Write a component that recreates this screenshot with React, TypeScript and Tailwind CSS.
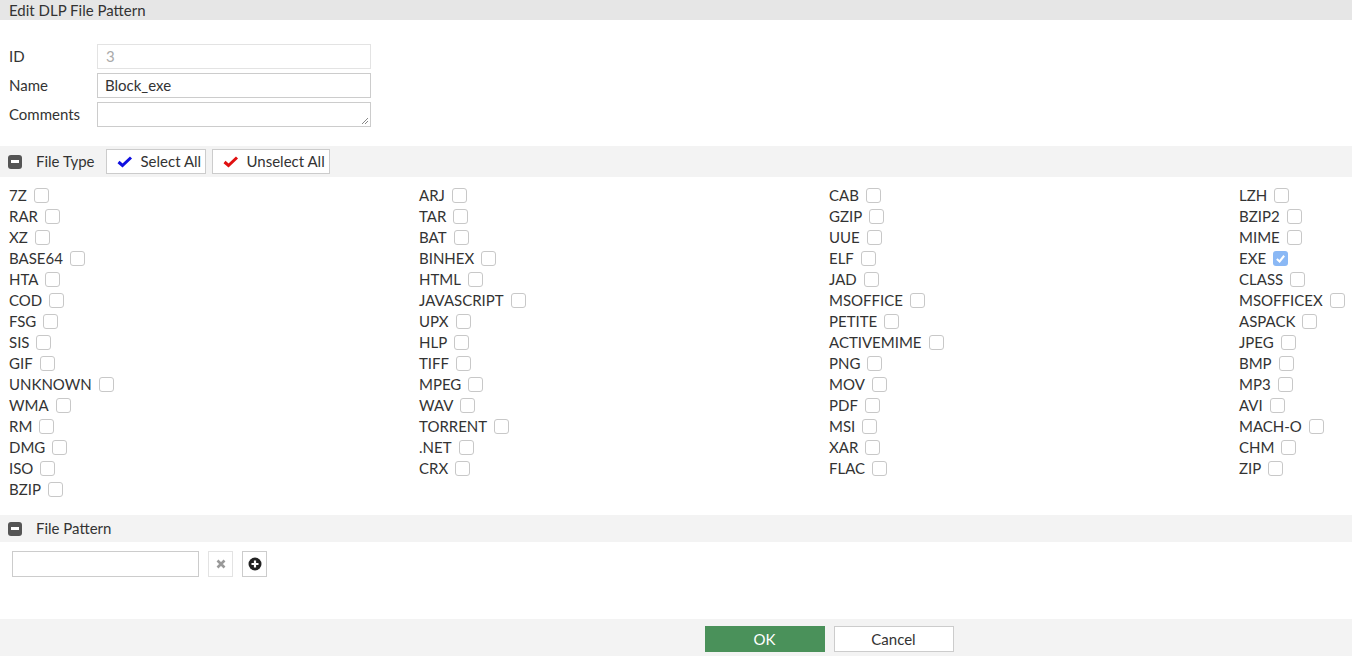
import React from 'react';

const rows: [string, string, string, string][] = [
  ['7Z', 'ARJ', 'CAB', 'LZH'],
  ['RAR', 'TAR', 'GZIP', 'BZIP2'],
  ['XZ', 'BAT', 'UUE', 'MIME'],
  ['BASE64', 'BINHEX', 'ELF', 'EXE'],
  ['HTA', 'HTML', 'JAD', 'CLASS'],
  ['COD', 'JAVASCRIPT', 'MSOFFICE', 'MSOFFICEX'],
  ['FSG', 'UPX', 'PETITE', 'ASPACK'],
  ['SIS', 'HLP', 'ACTIVEMIME', 'JPEG'],
  ['GIF', 'TIFF', 'PNG', 'BMP'],
  ['UNKNOWN', 'MPEG', 'MOV', 'MP3'],
  ['WMA', 'WAV', 'PDF', 'AVI'],
  ['RM', 'TORRENT', 'MSI', 'MACH-O'],
  ['DMG', '.NET', 'XAR', 'CHM'],
  ['ISO', 'CRX', 'FLAC', 'ZIP'],
  ['BZIP', '', '', ''],
];

const Check = ({ checked }: { checked?: boolean }) =>
  checked ? (
    <span className="inline-flex h-[15px] w-[15px] items-center justify-center rounded-[3px] bg-[#8ab8f5]">
      <svg width="11" height="11" viewBox="0 0 12 12">
        <path d="M2 6.5 L5 9.2 L10 3" fill="none" stroke="#fff" strokeWidth="2.2" />
      </svg>
    </span>
  ) : (
    <span className="inline-block h-[15px] w-[15px] rounded-[3px] border border-[#c8c8c8] bg-white" />
  );

const Minus = () => (
  <span className="inline-flex h-[14px] w-[14px] items-center justify-center rounded-[3px] bg-[#555]">
    <span className="h-[3px] w-[8px] bg-white" />
  </span>
);

const SectionBar = ({ title, children, className }: { title: string; children?: React.ReactNode; className: string }) => (
  <div className={`flex items-center bg-[#f3f3f3] pl-[8px] ${className}`}>
    <Minus />
    <span className="ml-[14px] mr-[11px]">{title}</span>
    {children}
  </div>
);

export default function App() {
  return (
    <div className="h-[656px] w-[1352px] overflow-hidden bg-white">
      <div className="flex h-[656px] w-[1658px] flex-col bg-white text-[15px] text-[#333] font-['Lato',sans-serif]">
        <div className="flex h-[20px] items-center bg-[#e6e6e6] pl-[9px]">Edit DLP File Pattern</div>

        <div className="mt-[24px] flex flex-col gap-[4px] pl-[9px]">
          <div className="flex items-center">
            <span className="w-[88px]">ID</span>
            <div className="flex h-[25px] w-[274px] items-center border border-[#e3e3e3] px-[8px] text-[#aaa]">3</div>
          </div>
          <div className="flex items-center">
            <span className="w-[88px]">Name</span>
            <div className="flex h-[25px] w-[274px] items-center border border-[#ccc] px-[7px]">Block_exe</div>
          </div>
          <div className="flex items-center">
            <span className="w-[88px]">Comments</span>
            <div className="relative h-[25px] w-[274px] border border-[#ccc]">
              <svg className="absolute bottom-[1px] right-[1px]" width="8" height="8" viewBox="0 0 8 8">
                <path d="M7 1 L1 7 M7 4 L4 7" stroke="#888" strokeWidth="1" />
              </svg>
            </div>
          </div>
        </div>

        <SectionBar title="File Type" className="mt-[19px] h-[31px]">
          <button className="flex h-[25px] w-[100px] items-center gap-[8px] border border-[#ccc] bg-white pl-[10px]">
            <svg width="16" height="12" viewBox="0 0 16 12">
              <path d="M1.5 6 L5.5 9.5 L14 1.5" fill="none" stroke="#1010e0" strokeWidth="3" />
            </svg>
            Select All
          </button>
          <button className="ml-[6px] flex h-[25px] w-[118px] items-center gap-[8px] border border-[#ccc] bg-white pl-[10px]">
            <svg width="16" height="12" viewBox="0 0 16 12">
              <path d="M1.5 6 L5.5 9.5 L14 1.5" fill="none" stroke="#e01010" strokeWidth="3" />
            </svg>
            Unselect All
          </button>
        </SectionBar>

        <div className="mt-[8px] grid grid-cols-[410px_410px_410px_410px] pl-[9px]">
          {rows.map((r, i) =>
            r.map((name, j) => (
              <div key={`${i}-${j}`} className="flex h-[21px] items-center gap-[7px]">
                {name && (
                  <>
                    <span>{name}</span>
                    <Check checked={name === 'EXE'} />
                  </>
                )}
              </div>
            ))
          )}
        </div>

        <SectionBar title="File Pattern" className="mt-[15px] h-[27px]" />

        <div className="mt-[9px] flex items-center pl-[12px]">
          <div className="h-[26px] w-[187px] border border-[#ccc]" />
          <button className="ml-[9px] flex h-[26px] w-[25px] items-center justify-center border border-[#e3e3e3]">
            <svg width="10" height="10" viewBox="0 0 10 10">
              <path d="M1.5 1.5 L8.5 8.5 M8.5 1.5 L1.5 8.5" stroke="#999" strokeWidth="2.6" />
            </svg>
          </button>
          <button className="ml-[9px] flex h-[26px] w-[25px] items-center justify-center border border-[#ccc]">
            <svg width="14" height="14" viewBox="0 0 14 14">
              <circle cx="7" cy="7" r="6.5" fill="#222" />
              <path d="M7 3.5 V10.5 M3.5 7 H10.5" stroke="#fff" strokeWidth="2.2" />
            </svg>
          </button>
        </div>

        <div className="mt-auto flex h-[37px] items-center justify-center gap-[9px] bg-[#f3f3f3] pt-[3px]">
          <button className="h-[26px] w-[120px] bg-[#4a915a] text-white">OK</button>
          <button className="h-[26px] w-[120px] border border-[#ccc] bg-white">Cancel</button>
        </div>
      </div>
    </div>
  );
}
